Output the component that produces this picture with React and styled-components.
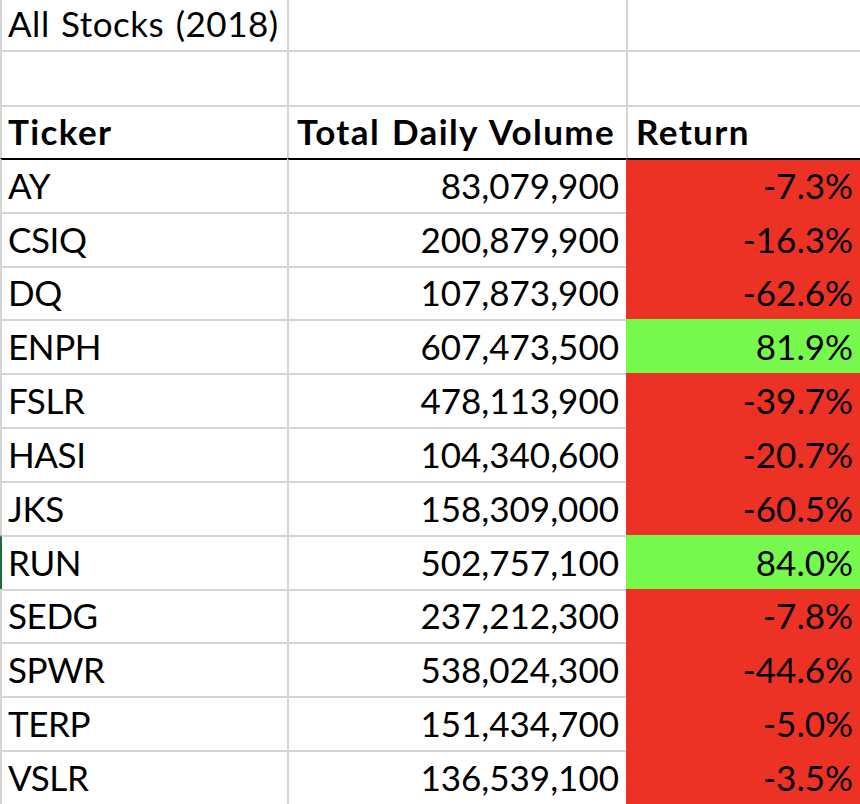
import React from "react";
import styled, { createGlobalStyle, css } from "styled-components";

const Global = createGlobalStyle`
  html, body { margin: 0; padding: 0; background: #fff; }
  body { overflow: hidden; }
`;

const GRID = "#d5d5d5";
const RED = "#ec3225";
const GREEN = "#76f84c";

const Sheet = styled.div`
  display: grid;
  grid-template-columns: 287px 339px 234px;
  grid-template-rows: 50px 55px 53px repeat(12, 53.833px);
  width: 860px;
  height: 804px;
  overflow: hidden;
  font-family: Lato, "Liberation Sans", sans-serif;
  font-size: 35px;
  color: #000;
`;

const Cell = styled.div`
  box-sizing: border-box;
  display: flex;
  align-items: flex-end;
  justify-content: ${(p) => (p.$right ? "flex-end" : "flex-start")};
  padding: 0 7px 9px 8px;
  line-height: 1;
  white-space: nowrap;
  overflow: hidden;
  font-weight: 400;
  border-top: ${(p) => (p.$noTop ? "0" : `2px solid ${p.$topColor || GRID}`)};
  border-left: 2px solid ${(p) => p.$leftColor || GRID};
  background: ${(p) => p.$fill || "transparent"};
  ${(p) =>
    p.$first &&
    css`
      padding-left: 6px;
    `}
`;

const TitleCell = styled(Cell)`
  letter-spacing: 0.5px;
  word-spacing: 2px;
`;

const HeadCell = styled(Cell)`
  font-weight: 700;
  letter-spacing: 1.4px;
  word-spacing: 2px;
`;

const TickerCell = styled(Cell)`
  letter-spacing: -0.4px;
`;

const rows = [
  ["AY", "83,079,900", "-7.3%"],
  ["CSIQ", "200,879,900", "-16.3%"],
  ["DQ", "107,873,900", "-62.6%"],
  ["ENPH", "607,473,500", "81.9%"],
  ["FSLR", "478,113,900", "-39.7%"],
  ["HASI", "104,340,600", "-20.7%"],
  ["JKS", "158,309,000", "-60.5%"],
  ["RUN", "502,757,100", "84.0%"],
  ["SEDG", "237,212,300", "-7.8%"],
  ["SPWR", "538,024,300", "-44.6%"],
  ["TERP", "151,434,700", "-5.0%"],
  ["VSLR", "136,539,100", "-3.5%"],
];

export default function App() {
  return (
    <>
      <Global />
      <Sheet>
        <TitleCell $noTop $first>All Stocks (2018)</TitleCell>
        <Cell $noTop />
        <Cell $noTop />

        <Cell $first />
        <Cell />
        <Cell />

        <HeadCell $first>Ticker</HeadCell>
        <HeadCell>Total Daily Volume</HeadCell>
        <HeadCell>Return</HeadCell>

        {rows.map(([t, v, r], i) => {
          const fill = r.startsWith("-") ? RED : GREEN;
          const top = i === 0 ? "#000" : undefined;
          return (
            <React.Fragment key={t}>
              <TickerCell $first $topColor={top} $leftColor={t === "RUN" ? "#1e6b3c" : undefined}>
                {t}
              </TickerCell>
              <Cell $right $topColor={top}>{v}</Cell>
              <Cell $right $fill={fill} $leftColor={fill} $topColor={i === 0 ? "#000" : fill}>
                {r}
              </Cell>
            </React.Fragment>
          );
        })}
      </Sheet>
    </>
  );
}
